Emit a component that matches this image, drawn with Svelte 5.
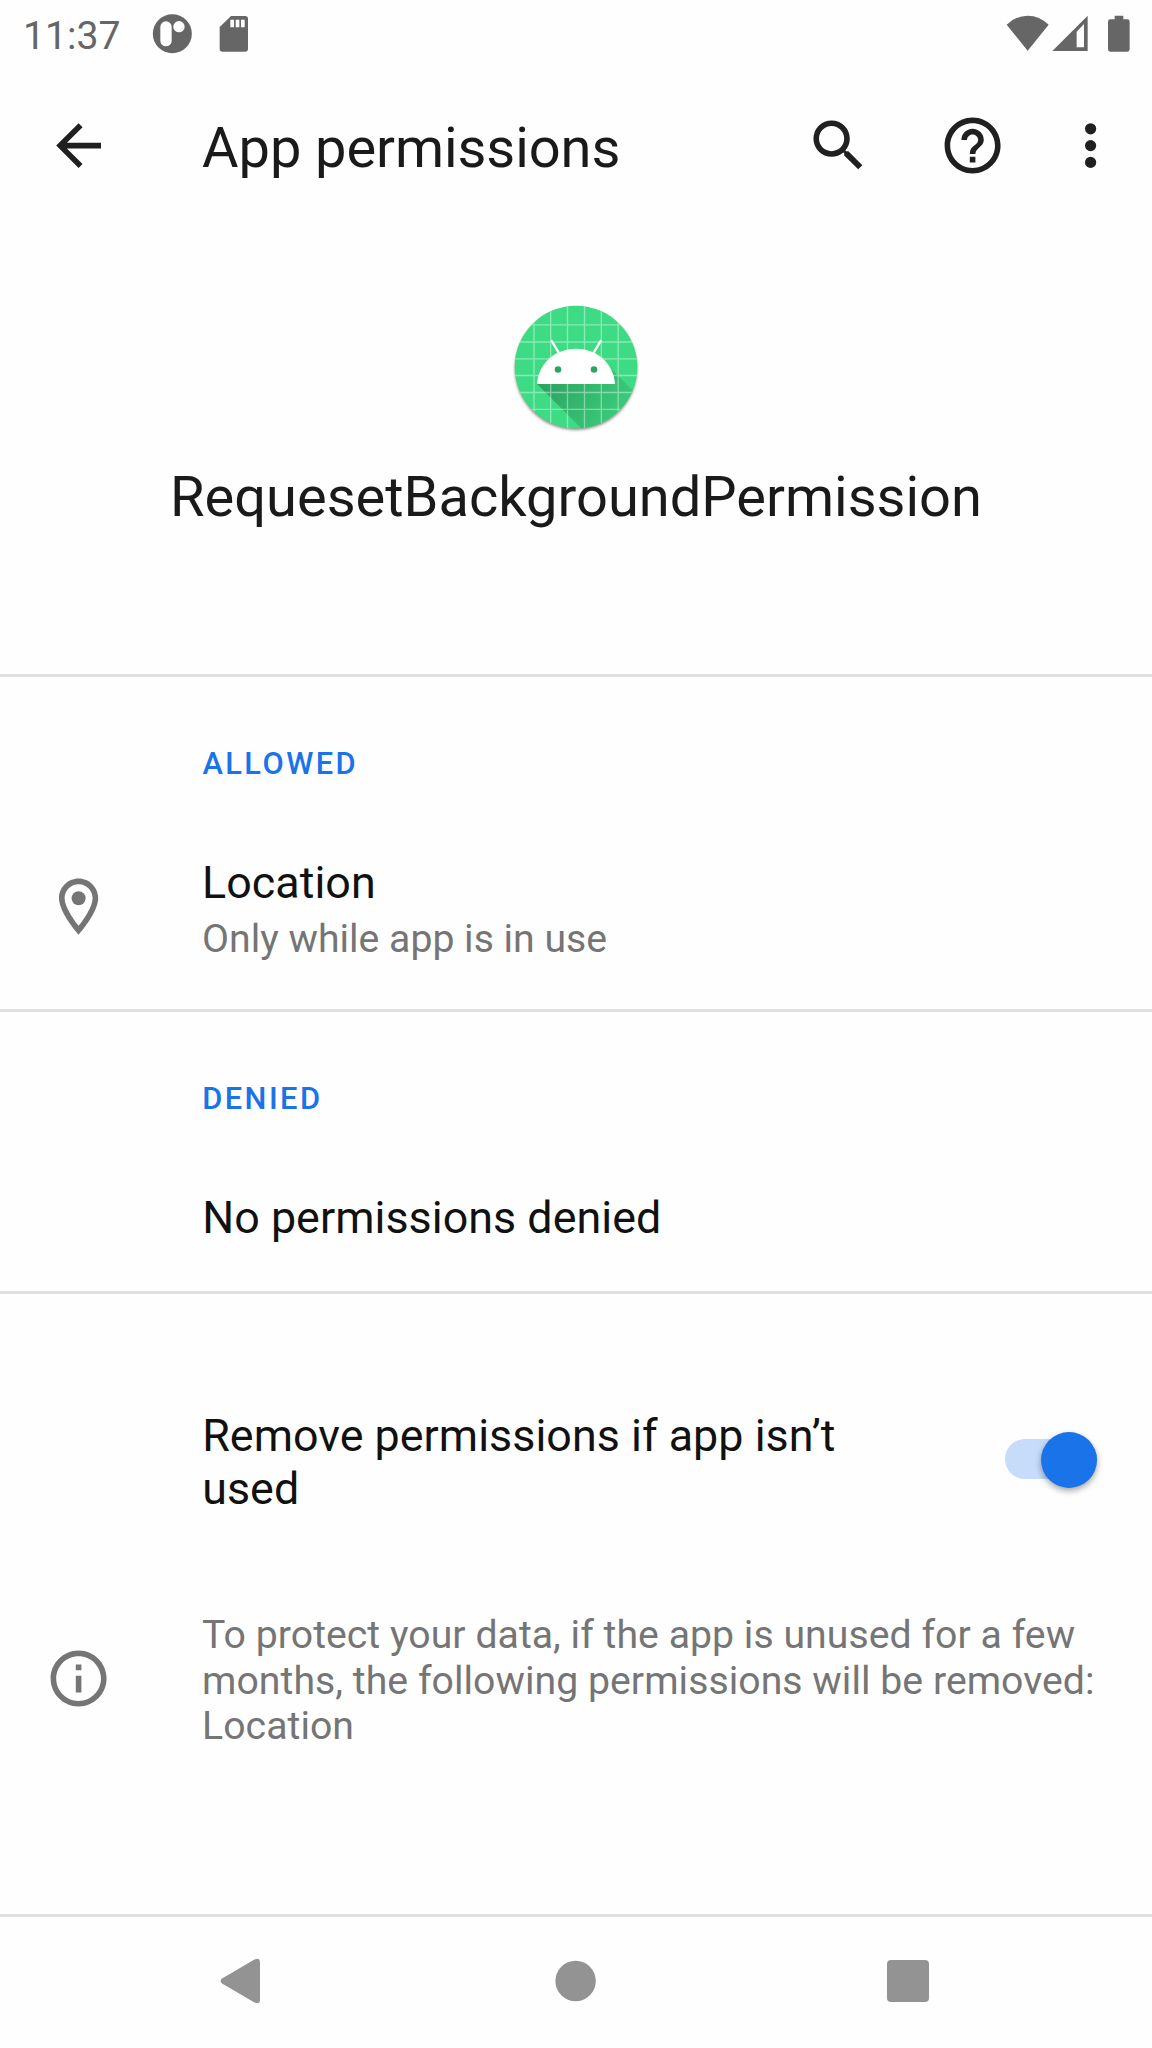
<script lang="ts">
  let autoRevoke = true;

  const gridX = [132, 182, 232.5, 283.5, 334, 384.5];
  const gridY = [104.5, 156, 206.5, 256.5, 307.5, 358];

  function toggleRevoke() {
    autoRevoke = !autoRevoke;
  }
</script>

<div class="screen">
  <div class="status-bar">
    <span class="clock">11:37</span>
    <svg class="notifications" viewBox="0 0 390 201" aria-hidden="true">
      <circle cx="97" cy="101" r="58.5" />
      <rect class="cutout" x="61" y="64" width="34" height="75" rx="17" />
      <circle class="cutout" cx="117" cy="80" r="17" />
      <path d="M273 48H315Q324 48 324 57V146Q324 155 315 155H248Q239 155 239 146V81Z" />
      <path class="cutout" d="M271 59h11v23h-11zM287 59h11v23h-11zM303 59h11v23h-11z" />
    </svg>
    <svg class="signals" viewBox="0 0 516 201" aria-hidden="true">
      <path d="M80 74Q108 47 143 47T206 74L143 152Z" />
      <path fill-rule="evenodd" d="M323 47V153H217ZM312 72L290 95V142H312Z" />
      <path d="M404 47h26v11h12q7 0 7 7v83q0 7-7 7h-51q-7 0-7-7V65q0-7 7-7h13z" />
    </svg>
  </div>

  <header class="app-bar">
    <button type="button" class="icon-button back" aria-label="Back">
      <svg viewBox="0 0 24 24"><path d="M20 11H7.83l5.59-5.59L12 4l-8 8 8 8 1.41-1.41L7.83 13H20z" /></svg>
    </button>
    <h1>App permissions</h1>
    <button type="button" class="icon-button search" aria-label="Search">
      <svg viewBox="0 0 24 24">
        <path d="M15.5 14h-.79l-.28-.27A6.471 6.471 0 0 0 16 9.5 6.5 6.5 0 1 0 9.5 16c1.61 0 3.09-.59 4.23-1.57l.27.28v.79l5 4.99L20.49 19zm-6 0C7.01 14 5 11.99 5 9.5S7.01 5 9.5 5 14 7.01 14 9.5 11.99 14 9.5 14" />
      </svg>
    </button>
    <button type="button" class="icon-button help" aria-label="Help">
      <svg viewBox="0 0 24 24">
        <path d="M11 18h2v-2h-2zm1-16C6.48 2 2 6.48 2 12s4.48 10 10 10 10-4.48 10-10S17.52 2 12 2m0 18c-4.41 0-8-3.59-8-8s3.59-8 8-8 8 3.59 8 8-3.59 8-8 8m0-14c-2.21 0-4 1.79-4 4h2c0-1.1.9-2 2-2s2 .9 2 2c0 2-3 1.75-3 5h2c0-2.25 3-2.5 3-5 0-2.21-1.79-4-4-4" />
      </svg>
    </button>
    <button type="button" class="icon-button more" aria-label="More options">
      <svg viewBox="0 0 24 24">
        <circle cx="12" cy="6" r="2" />
        <circle cx="12" cy="12" r="2" />
        <circle cx="12" cy="18" r="2" />
      </svg>
    </button>
  </header>

  <section class="app-summary">
    <svg class="app-icon" viewBox="0 0 516 480" aria-hidden="true">
      <defs>
        <clipPath id="disc"><circle cx="258" cy="231" r="184" /></clipPath>
        <linearGradient id="shade" gradientUnits="userSpaceOnUse" x1="185" y1="265" x2="370" y2="400">
          <stop offset="0" stop-color="#2da563" />
          <stop offset="1" stop-color="#3acb7a" />
        </linearGradient>
        <filter id="soft" x="-10%" y="-10%" width="120%" height="120%">
          <feGaussianBlur stdDeviation="4" />
        </filter>
      </defs>
      <circle cx="258" cy="237" r="183" fill="#000" opacity="0.45" filter="url(#soft)" />
      <g clip-path="url(#disc)">
        <rect x="70" y="40" width="380" height="380" fill="#3ddc84" />
        <path d="M141 282L290 431H516V390L364 237L340 282Z" fill="url(#shade)" />
        <g stroke="#fff" stroke-width="4" opacity="0.4">
          {#each gridX as x}
            <line x1={x} x2={x} y1="40" y2="420" />
          {/each}
          {#each gridY as y}
            <line x1="70" x2="450" y1={y} y2={y} />
          {/each}
        </g>
      </g>
      <path d="M141 282C145 221 194 176 258 176S371 221 375 282Z" fill="#fff" />
      <path d="M185 153L206 188M332 153L311 188" stroke="#fff" stroke-width="7" stroke-linecap="round" />
      <circle cx="204" cy="238.5" r="10" fill="#2da563" />
      <circle cx="312" cy="238.5" r="10" fill="#2da563" />
    </svg>
    <h2>RequesetBackgroundPermission</h2>
  </section>

  <section class="group allowed">
    <h3>ALLOWED</h3>
    <div class="row">
      <svg class="row-icon" viewBox="0 0 24 24" aria-hidden="true">
        <path d="M12 2C8.13 2 5 5.13 5 9c0 5.25 7 13 7 13s7-7.75 7-13c0-3.87-3.13-7-7-7M7 9c0-2.76 2.24-5 5-5s5 2.24 5 5c0 2.88-2.88 7.19-5 9.88C9.92 16.21 7 11.85 7 9" />
        <circle cx="12" cy="9" r="2.5" />
      </svg>
      <div class="row-text">
        <p class="title">Location</p>
        <p class="summary">Only while app is in use</p>
      </div>
    </div>
  </section>

  <section class="group denied">
    <h3>DENIED</h3>
    <p class="title">No permissions denied</p>
  </section>

  <section class="revoke">
    <p class="title">Remove permissions if app isn’t used</p>
    <button
      type="button"
      class="switch"
      class:on={autoRevoke}
      role="switch"
      aria-checked={autoRevoke}
      aria-label="Remove permissions"
      on:click={toggleRevoke}
    >
      <span class="thumb"></span>
    </button>
  </section>

  <section class="note">
    <svg class="row-icon" viewBox="0 0 24 24" aria-hidden="true">
      <path d="M11 7h2v2h-2zm0 4h2v6h-2zm1-9C6.48 2 2 6.48 2 12s4.48 10 10 10 10-4.48 10-10S17.52 2 12 2m0 18c-4.41 0-8-3.59-8-8s3.59-8 8-8 8 3.59 8 8-3.59 8-8 8" />
    </svg>
    <p class="summary">
      To protect your data, if the app is unused for a few months, the following permissions will be removed: Location
    </p>
  </section>

  <nav class="nav-bar">
    <button type="button" aria-label="Back">
      <svg viewBox="0 0 46 46"><path d="M4 20.5L36.5 1.5Q41.5-1 42 4V42Q41.5 47 36.5 44.5L4 25.5Q1 23 4 20.5Z" /></svg>
    </button>
    <button type="button" aria-label="Home">
      <svg viewBox="0 0 46 46"><circle cx="23.6" cy="23" r="20.2" /></svg>
    </button>
    <button type="button" aria-label="Recent apps">
      <svg viewBox="0 0 46 46"><rect x="2" y="2" width="42" height="42" rx="4" /></svg>
    </button>
  </nav>
</div>

<style>
  :global(body) {
    margin: 0;
    background: #fefefe;
  }

  .screen {
    display: flex;
    flex-direction: column;
    width: 1152px;
    height: 2048px;
    overflow: hidden;
    background: #fefefe;
    color: #1a1a1a;
    font-family: Roboto, sans-serif;
  }

  h1,
  h2,
  h3,
  p {
    margin: 0;
    font-weight: 400;
  }

  button {
    border: 0;
    padding: 0;
    background: transparent;
  }

  svg {
    display: block;
    flex: none;
  }

  .status-bar {
    display: flex;
    height: 67px;
    fill: #666;
  }

  .clock {
    width: 97px;
    padding: 13px 0 0 23px;
    color: #666;
    font-size: 39.2px;
    line-height: 46px;
  }

  .notifications {
    width: 130px;
    height: 67px;
    margin-left: 20px;
  }

  .cutout {
    fill: #fefefe;
  }

  .signals {
    width: 172px;
    height: 67px;
    margin-left: auto;
  }

  .app-bar {
    display: flex;
    align-items: center;
    height: 157px;
    padding-left: 45px;
  }

  .icon-button svg {
    width: 67.2px;
    height: 67.2px;
    fill: #202020;
  }

  h1 {
    flex: 1;
    margin-left: 89.9px;
    padding-top: 5px;
    font-size: 56px;
    line-height: 66px;
    letter-spacing: -0.08px;
  }

  .help {
    margin-left: 67px;
  }

  .more {
    margin: 0 28px 0 50.5px;
  }

  .app-summary {
    display: flex;
    flex-direction: column;
    align-items: center;
    box-sizing: border-box;
    height: 453px;
    padding-top: 66px;
    border-bottom: 3px solid #dfdfdf;
  }

  .app-icon {
    width: 172px;
    height: 160px;
  }

  h2 {
    margin-top: 14px;
    font-size: 56px;
    line-height: 66px;
  }

  .group {
    box-sizing: border-box;
    border-bottom: 3px solid #dfdfdf;
  }

  .allowed {
    height: 335px;
    padding-top: 69px;
  }

  .denied {
    height: 282px;
    padding: 69px 0 0 202.2px;
  }

  h3 {
    color: #1a73e8;
    font-size: 30.8px;
    font-weight: 500;
    line-height: 36px;
    letter-spacing: 0.08em;
  }

  .allowed h3 {
    padding-left: 202.4px;
  }

  .row {
    display: flex;
    align-items: center;
    margin-top: 75px;
  }

  .row-icon {
    width: 67.2px;
    height: 67.2px;
    margin: 0 89.9px 0 45px;
    fill: #757575;
  }

  .row .row-icon {
    margin-top: -5px;
  }

  .title {
    color: #111;
    font-size: 44.8px;
    line-height: 52.5px;
    letter-spacing: 0.04px;
  }

  .summary {
    color: #757575;
    font-size: 39.2px;
    line-height: 45.6px;
    letter-spacing: 0.04px;
  }

  .row .summary {
    margin-top: 7px;
    letter-spacing: 0;
  }

  .denied .title {
    margin-top: 75px;
  }

  .revoke {
    display: flex;
    justify-content: space-between;
    align-items: center;
    height: 105px;
    padding: 116px 55px 0 202.2px;
  }

  .revoke .title {
    width: 700px;
  }

  .switch {
    display: flex;
    align-items: center;
    width: 92px;
    height: 39.2px;
    margin-top: -7px;
    border-radius: 20px;
    background: #d0d0d0;
  }

  .switch.on {
    justify-content: flex-end;
    background: #c6dcfa;
  }

  .thumb {
    width: 56px;
    height: 56px;
    margin-top: 1px;
    border-radius: 50%;
    background: #fff;
    box-shadow: 0 3px 6px rgba(0, 0, 0, 0.35);
  }

  .on .thumb {
    background: #1a73e8;
  }

  .note {
    display: flex;
    align-items: center;
    margin-top: 98px;
  }

  .note .summary {
    width: 910px;
  }

  .note .row-icon {
    margin-top: -5px;
  }

  .nav-bar {
    display: flex;
    justify-content: space-between;
    align-items: center;
    box-sizing: border-box;
    height: 134px;
    margin-top: auto;
    padding: 0 221px 3px 218px;
    border-top: 3px solid #dfdfdf;
  }

  .nav-bar svg {
    width: 46px;
    height: 46px;
    fill: #939393;
  }
</style>
